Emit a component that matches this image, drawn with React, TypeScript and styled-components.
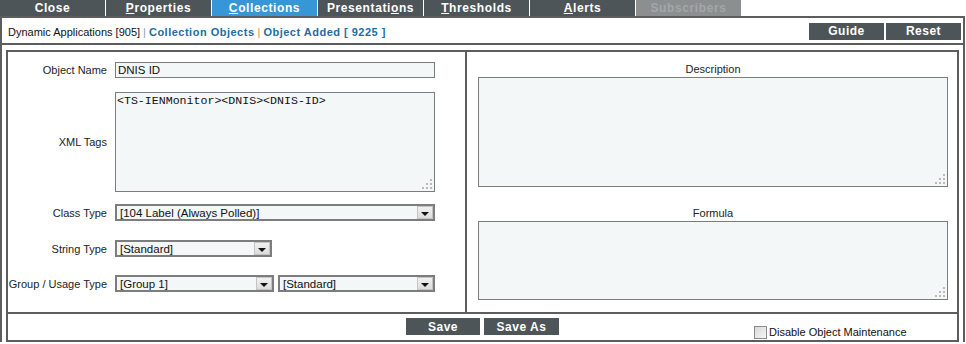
import styled, { createGlobalStyle } from "styled-components";

const GlobalStyle = createGlobalStyle`
  html, body {
    margin: 0;
    padding: 0;
    background: #ffffff;
  }
  body {
    width: 966px;
    height: 344px;
    overflow: hidden;
    font-family: "Liberation Sans", Arial, sans-serif;
    font-size: 11px;
    color: #111111;
  }
`;

const tabs = [
  { label: "Close", key: -1 },
  { label: "Properties", key: 0 },
  { label: "Collections", key: 0, active: true },
  { label: "Presentations", key: 10 },
  { label: "Thresholds", key: 0 },
  { label: "Alerts", key: 0 },
  { label: "Subscribers", key: -1, disabled: true },
];

function TabLabel({ label, at }: { label: string; at: number }) {
  if (at < 0) return <>{label}</>;
  return (
    <>
      {label.slice(0, at)}
      <u>{label[at]}</u>
      {label.slice(at + 1)}
    </>
  );
}

function Grip() {
  const dots = [
    [8, 0],
    [4, 4],
    [8, 4],
    [0, 8],
    [4, 8],
    [8, 8],
  ];
  return (
    <GripMark width="10" height="10" viewBox="0 0 10 10">
      {dots.map(([x, y]) => (
        <rect key={`${x}-${y}`} x={x} y={y} width="2" height="2" fill="#b9b9b9" />
      ))}
    </GripMark>
  );
}

function Select({ value, width }: { value: string; width: number }) {
  return (
    <SelectBox $width={width}>
      <SelectText>{value}</SelectText>
      <ArrowButton>
        <Triangle />
      </ArrowButton>
    </SelectBox>
  );
}

export default function App() {
  return (
    <>
      <GlobalStyle />
      <TabBar>
        {tabs.map((t) => (
          <Tab key={t.label} $active={t.active} $disabled={t.disabled}>
            <TabLabel label={t.label} at={t.key} />
          </Tab>
        ))}
      </TabBar>
      <Panel>
        <HeaderRow>
          <Crumbs>
            <span>Dynamic Applications [905]</span>
            <Pipe $color="#7fa6c4">|</Pipe>
            <CrumbLink>Collection Objects</CrumbLink>
            <Pipe $color="#d2924a">|</Pipe>
            <CrumbLink>Object Added [ 9225 ]</CrumbLink>
          </Crumbs>
          <HeaderButtons>
            <DarkButton>Guide</DarkButton>
            <DarkButton>Reset</DarkButton>
          </HeaderButtons>
        </HeaderRow>
        <Body>
          <FormBox>
            <FormColumns>
              <LeftColumn>
                <FieldRow $mt={10}>
                  <Label>Object Name</Label>
                  <TextInput readOnly defaultValue="DNIS ID" />
                </FieldRow>
                <FieldRow $mt={14}>
                  <Label>XML Tags</Label>
                  <AreaWrap>
                    <Area
                      readOnly
                      $height={100}
                      $mono
                      defaultValue="<TS-IENMonitor><DNIS><DNIS-ID>"
                    />
                    <Grip />
                  </AreaWrap>
                </FieldRow>
                <FieldRow $mt={12}>
                  <Label>Class Type</Label>
                  <Select value="[104 Label (Always Polled)]" width={320} />
                </FieldRow>
                <FieldRow $mt={19}>
                  <Label>String Type</Label>
                  <Select value="[Standard]" width={157} />
                </FieldRow>
                <FieldRow $mt={18}>
                  <Label>Group / Usage Type</Label>
                  <SelectPair>
                    <Select value="[Group 1]" width={159} />
                    <Select value="[Standard]" width={157} />
                  </SelectPair>
                </FieldRow>
              </LeftColumn>
              <RightColumn>
                <AreaLabel $mt={11}>Description</AreaLabel>
                <AreaWrap>
                  <Area readOnly $height={110} defaultValue="" />
                  <Grip />
                </AreaWrap>
                <AreaLabel $mt={20}>Formula</AreaLabel>
                <AreaWrap>
                  <Area readOnly $height={79} defaultValue="" />
                  <Grip />
                </AreaWrap>
              </RightColumn>
            </FormColumns>
            <ActionRow>
              <span />
              <ActionButtons>
                <DarkButton $width={74}>Save</DarkButton>
                <DarkButton $width={75}>Save As</DarkButton>
              </ActionButtons>
              <CheckOption>
                <CheckBox />
                <span>Disable Object Maintenance</span>
              </CheckOption>
            </ActionRow>
          </FormBox>
        </Body>
      </Panel>
    </>
  );
}

const TabBar = styled.div`
  display: flex;
  gap: 1px;
  height: 16px;
`;

const Tab = styled.div<{ $active?: boolean; $disabled?: boolean }>`
  width: 105px;
  height: 16px;
  display: flex;
  align-items: center;
  justify-content: center;
  background: ${(p) => (p.$active ? "#3797d6" : p.$disabled ? "#8b8f90" : "#4d5558")};
  color: ${(p) => (p.$disabled ? "#a3a7a8" : "#ffffff")};
  font-weight: bold;
  font-size: 12px;
  letter-spacing: 0.6px;
  line-height: 16px;
  u {
    text-underline-offset: 1px;
  }
`;

const Panel = styled.div`
  width: 965px;
  box-sizing: border-box;
  border: 2px solid #5d5d5d;
  border-bottom: none;
`;

const HeaderRow = styled.div`
  height: 25px;
  display: flex;
  align-items: center;
  justify-content: space-between;
  padding: 0 2px 0 6px;
  border-bottom: 2px solid #5d5d5d;
`;

const Crumbs = styled.div`
  display: flex;
  align-items: center;
  font-size: 11px;
  color: #111111;
  padding-top: 2px;
`;

const Pipe = styled.span<{ $color: string }>`
  color: ${(p) => p.$color};
  margin: 0 3px;
`;

const CrumbLink = styled.span`
  color: #1d6ca4;
  font-weight: bold;
  letter-spacing: 0.5px;
`;

const HeaderButtons = styled.div`
  display: flex;
  gap: 2px;
  padding-top: 1px;
`;

const DarkButton = styled.div<{ $width?: number }>`
  width: ${(p) => p.$width ?? 75}px;
  height: 17px;
  display: flex;
  align-items: center;
  justify-content: center;
  background: #4d5558;
  color: #ffffff;
  font-weight: bold;
  font-size: 12px;
  letter-spacing: 0.5px;
`;

const Body = styled.div`
  padding: 5px 4px 0 4px;
`;

const FormBox = styled.div`
  border: 2px solid #5d5d5d;
`;

const FormColumns = styled.div`
  display: grid;
  grid-template-columns: 459px 1fr;
  height: 260px;
  border-bottom: 2px solid #5d5d5d;
`;

const LeftColumn = styled.div`
  border-right: 2px solid #5d5d5d;
  display: flex;
  flex-direction: column;
`;

const FieldRow = styled.div<{ $mt: number }>`
  display: grid;
  grid-template-columns: 99px 320px;
  column-gap: 8px;
  align-items: center;
  margin-top: ${(p) => p.$mt}px;
`;

const Label = styled.div`
  text-align: right;
  font-size: 11px;
  color: #222222;
`;

const fieldBase = `
  box-sizing: border-box;
  background: #f3f7f7;
  border: 1px solid #7c7c7c;
  outline: none;
  margin: 0;
`;

const TextInput = styled.input`
  ${fieldBase}
  width: 320px;
  height: 16px;
  padding: 0 2px;
  font-family: "Liberation Sans", Arial, sans-serif;
  font-size: 11.5px;
  color: #111111;
`;

const AreaWrap = styled.div`
  position: relative;
  display: flex;
`;

const Area = styled.textarea<{ $height: number; $mono?: boolean }>`
  ${fieldBase}
  width: 100%;
  height: ${(p) => p.$height}px;
  resize: none;
  padding: 1px 1px;
  font-family: ${(p) =>
    p.$mono ? `"Liberation Mono", "Courier New", monospace` : `"Liberation Sans", Arial, sans-serif`};
  font-size: 11.6px;
  line-height: 13px;
  color: #111111;
`;

const GripMark = styled.svg`
  position: absolute;
  right: 3px;
  bottom: 3px;
`;

const SelectBox = styled.div<{ $width: number }>`
  box-sizing: border-box;
  width: ${(p) => p.$width}px;
  height: 17px;
  background: #f3f7f7;
  border: 2px solid #7d7d7d;
  display: flex;
  align-items: center;
  justify-content: space-between;
  padding-left: 3px;
`;

const SelectText = styled.span`
  font-size: 11.5px;
  color: #111111;
  white-space: nowrap;
`;

const ArrowButton = styled.div`
  width: 16px;
  height: 13px;
  box-sizing: border-box;
  background: linear-gradient(#f0f0f0, #dcdcdc);
  border: 1px solid #c4c4c4;
  display: flex;
  align-items: center;
  justify-content: center;
  padding-top: 3px;
`;

const Triangle = styled.div`
  width: 0;
  height: 0;
  border-left: 4px solid transparent;
  border-right: 4px solid transparent;
  border-top: 4px solid #111111;
`;

const SelectPair = styled.div`
  display: flex;
  gap: 4px;
`;

const RightColumn = styled.div`
  display: flex;
  flex-direction: column;
  padding: 0 9px 0 11px;
`;

const AreaLabel = styled.div<{ $mt: number }>`
  text-align: center;
  font-size: 11px;
  color: #222222;
  margin-top: ${(p) => p.$mt}px;
  margin-bottom: 1px;
  line-height: 13px;
`;

const ActionRow = styled.div`
  height: 26px;
  display: grid;
  grid-template-columns: 1fr auto 1fr;
  align-items: center;
`;

const ActionButtons = styled.div`
  display: flex;
  gap: 4px;
  padding-bottom: 1px;
`;

const CheckOption = styled.div`
  display: flex;
  align-items: center;
  gap: 2px;
  padding-left: 195px;
  padding-top: 10px;
  font-size: 11px;
  color: #111111;
  white-space: nowrap;
`;

const CheckBox = styled.div`
  width: 13px;
  height: 13px;
  box-sizing: border-box;
  border: 1px solid #8a8a8a;
  background: linear-gradient(135deg, #d8d8d8, #f6f6f6);
`;
